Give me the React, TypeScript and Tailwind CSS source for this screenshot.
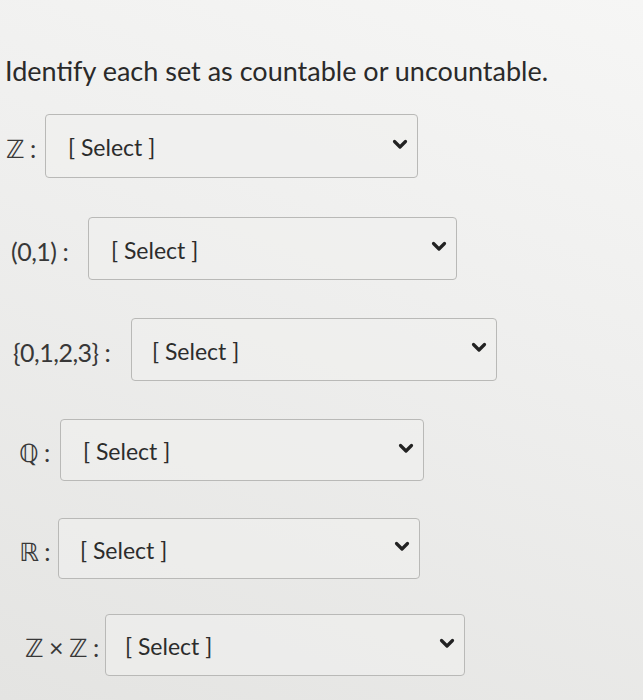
const rows = [
  { label: "ℤ :", pl: "pl-[6px]", mt: "mt-[27px]", lw: "w-[39px]", bw: "w-[373px]", h: "h-[64px]", tp: "pl-[22px]" },
  { label: "(0,1) :", pl: "pl-[11px]", mt: "mt-[39px]", lw: "w-[77px]", bw: "w-[369px]", h: "h-[63px]", tp: "pl-[22px]" },
  { label: "{0,1,2,3} :", pl: "pl-[13px]", mt: "mt-[38px]", lw: "w-[118px]", bw: "w-[366px]", h: "h-[63px]", tp: "pl-[20px]" },
  { label: "ℚ :", pl: "pl-[19px]", mt: "mt-[38px]", lw: "w-[41px]", bw: "w-[364px]", h: "h-[62px]", tp: "pl-[22px]" },
  { label: "ℝ :", pl: "pl-[19px]", mt: "mt-[37px]", lw: "w-[39px]", bw: "w-[362px]", h: "h-[61px]", tp: "pl-[21px]" },
  { label: "ℤ × ℤ :", pl: "pl-[25px]", mt: "mt-[35px]", lw: "w-[80px]", bw: "w-[360px]", h: "h-[62px]", tp: "pl-[19px]" },
];

function Chevron() {
  return (
    <svg width="16" height="11" viewBox="0 0 16 11" className="shrink-0">
      <path d="M2.5 2.5 L8 8 L13.5 2.5" fill="none" stroke="#222222" strokeWidth="3.2" strokeLinecap="round" strokeLinejoin="round" />
    </svg>
  );
}

export default function App() {
  return (
    <div
      className="h-[700px] w-[643px] overflow-hidden bg-[linear-gradient(200deg,#f6f6f5_0%,#efefee_40%,#e4e4e2_100%)] pt-[55px] text-[#2f2f2f]"
      style={{ fontFamily: "Lato, 'DejaVu Sans', sans-serif" }}
    >
      <h1 className="pl-[5px] text-[27px] leading-[32px] font-normal text-[#2a2a2a]">
        Identify each set as countable or uncountable.
      </h1>
      {rows.map((r) => (
        <div key={r.label} className={`flex items-center ${r.pl} ${r.mt}`}>
          <span className={`${r.lw} shrink-0 whitespace-nowrap pt-[6px] text-[25px] tracking-[-0.5px] text-[#383838]`}>
            {r.label}
          </span>
          <div
            className={`${r.bw} ${r.h} flex items-center justify-between rounded-[4px] border border-[#b9b9b7] bg-[#f0f0ee]/60 ${r.tp} pr-[9px]`}
          >
            <span className="pt-[3px] text-[23px] text-[#2c2c2c]">[ Select ]</span>
            <span className="-mt-[4px]">
              <Chevron />
            </span>
          </div>
        </div>
      ))}
    </div>
  );
}
